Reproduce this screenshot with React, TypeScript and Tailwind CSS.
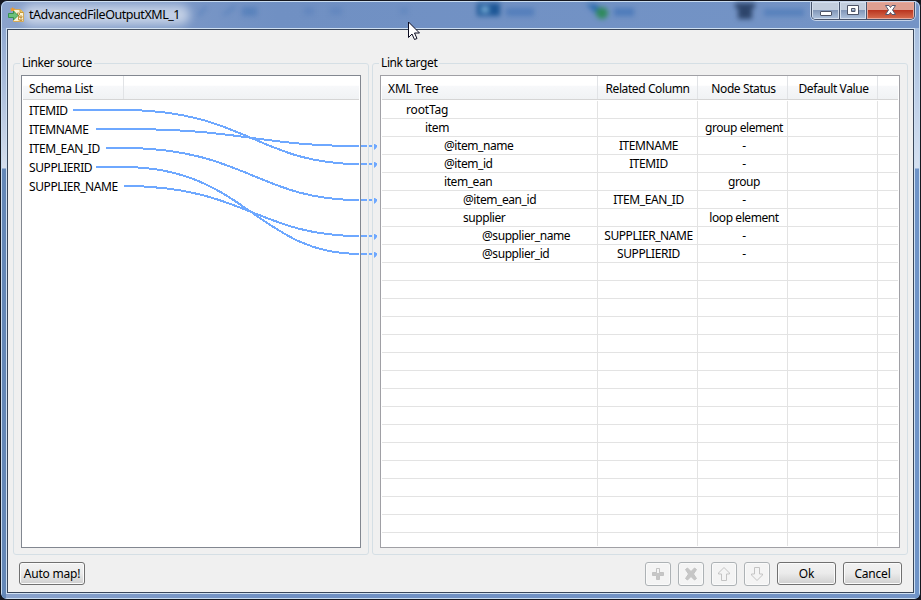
import React from "react";
import clsx from "clsx";

type TreeRow = {
  label: string;
  indent: string;
  column?: string;
  status?: string;
};

const sources = ["ITEMID", "ITEMNAME", "ITEM_EAN_ID", "SUPPLIERID", "SUPPLIER_NAME"];

const treeRows: TreeRow[] = [
  { label: "rootTag", indent: "pl-[24px] tracking-[-0.15px]" },
  { label: "item", indent: "pl-[43px] tracking-[-0.3px]", status: "group element" },
  { label: "@item_name", indent: "pl-[62px]", column: "ITEMNAME", status: "-" },
  { label: "@item_id", indent: "pl-[62px]", column: "ITEMID", status: "-" },
  { label: "item_ean", indent: "pl-[62px]", status: "group" },
  { label: "@item_ean_id", indent: "pl-[81px]", column: "ITEM_EAN_ID", status: "-" },
  { label: "supplier", indent: "pl-[81px]", status: "loop element" },
  { label: "@supplier_name", indent: "pl-[100px]", column: "SUPPLIER_NAME", status: "-" },
  { label: "@supplier_id", indent: "pl-[100px]", column: "SUPPLIERID", status: "-" },
];

const emptyRows = Array.from({ length: 15 }, (_, i) => i);

// Link coordinates: start x, source row y, target row y
const links = [
  [73, 110, 164],
  [96, 129, 146],
  [106, 148, 200],
  [96, 167, 254],
  [124, 186, 236],
];

const gridCols = "grid grid-cols-[216px_100px_90px_90px_20px]";

const Links = () => (
  <svg
    className="absolute left-0 top-0 pointer-events-none"
    width="921"
    height="600"
    fill="none"
    stroke="#6ea8ff"
    strokeWidth="2"
    shapeRendering="crispEdges"
  >
    {links.map(([x, from, to]) => (
      <g key={from}>
        <path d={`M${x} ${from}H124C244 ${from} 259 ${to} 359 ${to}`} />
        <path d={`M361 ${to}H367M369 ${to}H372M374 ${to}H377`} />
        <path d={`M374 ${to - 2}h1v1h1v3h-1v1h-1z`} fill="#6ea8ff" strokeWidth="0.6" />
      </g>
    ))}
  </svg>
);

const AppIcon = () => (
  <svg width="16" height="16" viewBox="0 0 16 16" className="shrink-0">
    <path d="M5.5 2.5h7l3 3v9h-10z" fill="#fbf3d3" stroke="#d3a95a" />
    <path d="M12 2.500v3h3.500" fill="#e9c76b" stroke="#c79a3b" />
    <path d="M9.500 6h2v2h-2zM12 9h2v1.500h-2zM12 12h2v1.500h-2zM10.500 8v5H12M10.500 10H12" fill="#fff" stroke="#b98422" strokeWidth="0.8" />
    <path d="M4.500 0l1 1.500h1.700L6 3l.5 1.500L4.500 3.800 2.800 4.500 3.200 3 2 1.500h1.700z" fill="#ef9a2b" />
    <path d="M.5 6.500h5V4l4.500 4.500L5.500 13v-2.500h-5z" fill="#6cc07a" stroke="#2e8f45" strokeWidth="0.9" />
  </svg>
);

const TitleBar = () => (
  <div className="relative h-[26px] flex justify-between">
    {/* Shapes seen through the glass */}
    <svg className="absolute left-0 top-0 blur-[2.500px]" width="917" height="26">
      <g fill="#2f68b0" opacity="0.75">
        <path d="M203 4l-8 10h3l7-8zM232 3l-12 10h4l10-8zM240 5h15v9h-15z" opacity="0.5" />
        <path d="M302 5h10v8h-10zM328 5h12v8h-12zM398 6h8v6h-8z" opacity="0.25" />
        <rect x="504" y="6" width="28" height="8" opacity="0.6" />
        <rect x="612" y="6" width="20" height="8" opacity="0.7" />
        <rect x="762" y="7" width="40" height="7" opacity="0.55" />
      </g>
      <rect x="475" y="1" width="23" height="13" fill="#1d5796" />
      <rect x="479" y="4" width="8" height="7" fill="#6fa4cf" />
      <path d="M584 2h11l5 9h-7z" fill="#2f6eb0" />
      <circle cx="600" cy="11" r="6" fill="#2f8a5c" />
      <path d="M733 1h20v5h-3v11h-14V6h-3z" fill="#2d456b" />
    </svg>
    <div className="relative flex items-center h-[26px] pl-[6px] gap-[5px]">
      <div className="absolute left-[20px] top-[3px] w-[168px] h-[20px] rounded-full bg-white/55 blur-[5px]" />
      <div className="relative">
        <AppIcon />
      </div>
      <span className="relative text-[12.500px] tracking-[-0.45px]">tAdvancedFileOutputXML_1</span>
    </div>
    <div className="relative flex h-[18px] mr-[4px] rounded-b-[5px] border border-t-0 border-[#46536c] shadow-[0_0_0_1px_#c5d3e8] overflow-hidden">
      <div className="w-[28px] border-r border-[#46536c] bg-linear-to-b from-[#c2cddd] from-45% via-[#8398b9] via-50% to-[#b0c4df] shadow-[inset_0_0_0_1px_#d3deed]">
        <svg width="28" height="18">
          <rect x="8.500" y="9.500" width="11" height="4" rx="0.5" fill="#fff" stroke="#4d5467" />
        </svg>
      </div>
      <div className="w-[27px] border-r border-[#46536c] bg-linear-to-b from-[#c2cddd] from-45% via-[#8398b9] via-50% to-[#b0c4df] shadow-[inset_0_0_0_1px_#d3deed]">
        <svg width="27" height="18">
          <path d="M7.500 3.500h11v9h-11zM11.500 6.500v3h3.500v-3z" fill="#fff" fillRule="evenodd" stroke="#4d5467" />
        </svg>
      </div>
      <div className="w-[47px] bg-linear-to-b from-[#df9f91] from-45% via-[#bb3620] via-50% to-[#d76e50] shadow-[inset_0_0_0_1px_#e9aa9c]">
        <svg width="47" height="18">
          <path
            d="M18.500 3.500h3.500l1.500 2 1.500-2h3.500l-3 4.500 3 4.500H25l-1.500-2-1.500 2h-3.500l3-4.500z"
            fill="#fff"
            stroke="#555970"
          />
        </svg>
      </div>
    </div>
  </div>
);

const HeaderCell = ({ children, className }: { children?: React.ReactNode; className?: string }) => (
  <div
    className={clsx(
      "h-[23px] leading-[26px] border-r border-[#e1e3e6] bg-linear-to-b from-white from-40% via-[#f7f8fa] via-45% to-[#f0f2f4]",
      className
    )}
  >
    {children}
  </div>
);

const IconButton = ({ children }: { children: React.ReactNode }) => (
  <button
    disabled
    className="w-[26px] h-[24px] flex items-center justify-center rounded-[3px] border border-[#adb2b5] bg-[#f4f4f4] shadow-[inset_0_0_0_1px_#fafafa]"
  >
    <svg width="16" height="16" viewBox="0 0 16 16" fill="none" stroke="#c3c3c3">
      {children}
    </svg>
  </button>
);

const Button = ({ children, className }: { children: React.ReactNode; className: string }) => (
  <button
    className={clsx(
      "h-[23px] rounded-[3px] border border-[#707070] bg-linear-to-b from-[#f2f2f2] from-0% via-[#ebebeb] via-49% to-[#cfcfcf] shadow-[inset_0_0_0_1px_#fbfbfb] tracking-[-0.2px]",
      className
    )}
  >
    {children}
  </button>
);

const App = () => {
  return (
    <div className="w-[921px] h-[600px] bg-[#15171f] overflow-hidden font-['Noto_Sans','Open_Sans',sans-serif] text-[12px] leading-[16px] text-black">
      <div className="relative w-[921px] h-[600px] rounded-[7px] border border-[#15171f] bg-[#7090c3] overflow-hidden">
        <div className="h-full rounded-[6px] border border-[#c9dcf0] bg-linear-to-r from-[#8ba3cc] via-[#7090c3] via-30% to-[#7494c6] flex flex-col">
          <TitleBar />
          <div className="flex flex-1">
            <div className="w-[4px] bg-linear-to-b from-[#8fa8d0] via-[#d5deec] via-[140px] to-[#6488b8] to-[141px]" />
            <div className="w-[909px] h-[566px] border border-[#cfe0f2]">
              <div className="w-[907px] h-[564px] border border-[#39465a] bg-[#f0f0f0] pl-[5px] pt-[25px]">
                <div className="flex gap-[3px] h-[500px]">
                  {/* Linker source */}
                  <fieldset className="w-[356px] h-[500px] border border-[#d5dfe5] rounded-[3px] pl-[7px]">
                    <legend className="h-[16px] px-[2px] ml-[-1px] tracking-[-0.45px]">Linker source</legend>
                    <div className="mt-[4px] w-[340px] h-[473px] border border-[#828790] bg-white p-px pt-0">
                      <div className="grid grid-cols-[101px_1fr] border-b border-[#d5d5d5]">
                        <HeaderCell className="pl-[6px] tracking-[-0.3px]">Schema List</HeaderCell>
                        <HeaderCell className="border-r-0" />
                      </div>
                      <ul className="pt-[1px]">
                        {sources.map((name) => (
                          <li key={name} className="h-[19px] leading-[20px] pl-[6px] tracking-[-0.4px]">
                            {name}
                          </li>
                        ))}
                      </ul>
                    </div>
                  </fieldset>

                  {/* Link target */}
                  <fieldset className="w-[536px] h-[500px] border border-[#d5dfe5] rounded-[3px] pl-[7px]">
                    <legend className="h-[16px] px-[2px] ml-[-1px] tracking-[-0.4px]">Link target</legend>
                    <div className="mt-[4px] w-[520px] h-[473px] border border-[#a0a0a5] bg-white p-px pt-0 overflow-hidden">
                      <div className={clsx(gridCols, "border-b border-[#d5d5d5] tracking-[-0.4px]")}>
                        <HeaderCell className="pl-[6px] tracking-[-0.15px]">XML Tree</HeaderCell>
                        <HeaderCell className="text-center">Related Column</HeaderCell>
                        <HeaderCell className="text-center pl-[2px]">Node Status</HeaderCell>
                        <HeaderCell className="text-center pl-[2px]">Default Value</HeaderCell>
                        <HeaderCell className="border-r-0" />
                      </div>
                      <div className="pt-px tracking-[-0.43px]">
                        {treeRows.map((row) => (
                          <div
                            key={row.label}
                            className={clsx(gridCols, "h-[18px] leading-[18px] border-b border-[#e3e3e3]")}
                          >
                            <div className={clsx("border-r border-[#e3e3e3]", row.indent)}>{row.label}</div>
                            <div className="border-r border-[#e3e3e3] text-center pl-[2px] whitespace-nowrap">
                              {row.column}
                            </div>
                            <div className="border-r border-[#e3e3e3] text-center pl-[3px]">{row.status}</div>
                            <div className="border-r border-[#e3e3e3]" />
                          </div>
                        ))}
                        {emptyRows.map((i) => (
                          <div key={i} className={clsx(gridCols, "h-[18px] border-b border-[#e3e3e3]")}>
                            <div className="border-r border-[#e3e3e3]" />
                            <div className="border-r border-[#e3e3e3]" />
                            <div className="border-r border-[#e3e3e3]" />
                            <div className="border-r border-[#e3e3e3]" />
                          </div>
                        ))}
                        <div className={clsx(gridCols, "h-[13px]")}>
                          <div className="border-r border-[#e3e3e3]" />
                          <div className="border-r border-[#e3e3e3]" />
                          <div className="border-r border-[#e3e3e3]" />
                          <div className="border-r border-[#e3e3e3]" />
                        </div>
                      </div>
                    </div>
                  </fieldset>
                </div>

                <div className="flex justify-between mt-[7px] pl-[6px] pr-[11px]">
                  <Button className="w-[66px]">Auto map!</Button>
                  <div className="flex gap-[7px]">
                    <IconButton>
                      <path d="M6.500 2.500h3v4h4v3h-4v4h-3v-4h-4v-3h4z" fill="#c6c6c6" />
                      <path d="M7 3v4h2V3z" fill="#f4f4f4" stroke="none" />
                    </IconButton>
                    <IconButton>
                      <path d="M2.500 3.500l2-1.500L8 5.500 11.500 2l2 1.500L10.500 8l3 4.500-2 1.500L8 10.500 4.500 14l-2-1.500L5.500 8z" fill="#c6c6c6" />
                    </IconButton>
                    <IconButton>
                      <path d="M8 1.500l5.500 5.500v1h-3v6.500h-5V8h-3V7z" />
                    </IconButton>
                    <IconButton>
                      <path d="M8 14.500l5.500-5.500V8h-3V1.500h-5V8h-3v1z" />
                    </IconButton>
                    <Button className="w-[59px]">Ok</Button>
                    <Button className="w-[59px]">Cancel</Button>
                  </div>
                </div>
              </div>
            </div>
            <div className="w-[4px] bg-linear-to-b from-[#a7bede] via-[#d5e0f0] via-[140px] to-[#6f94c8] to-[141px]" />
          </div>
        </div>
      </div>

      <Links />

      {/* Mouse pointer */}
      <svg className="absolute left-[408px] top-[21px]" width="13" height="20" viewBox="0 0 13 20">
        <path
          d="M.5 1v15.500l3.500-3.500 2.500 5.500 2.500-1-2.500-5.500h5z"
          fill="#fff"
          stroke="#0b0b20"
        />
      </svg>
    </div>
  );
};

export default App;
